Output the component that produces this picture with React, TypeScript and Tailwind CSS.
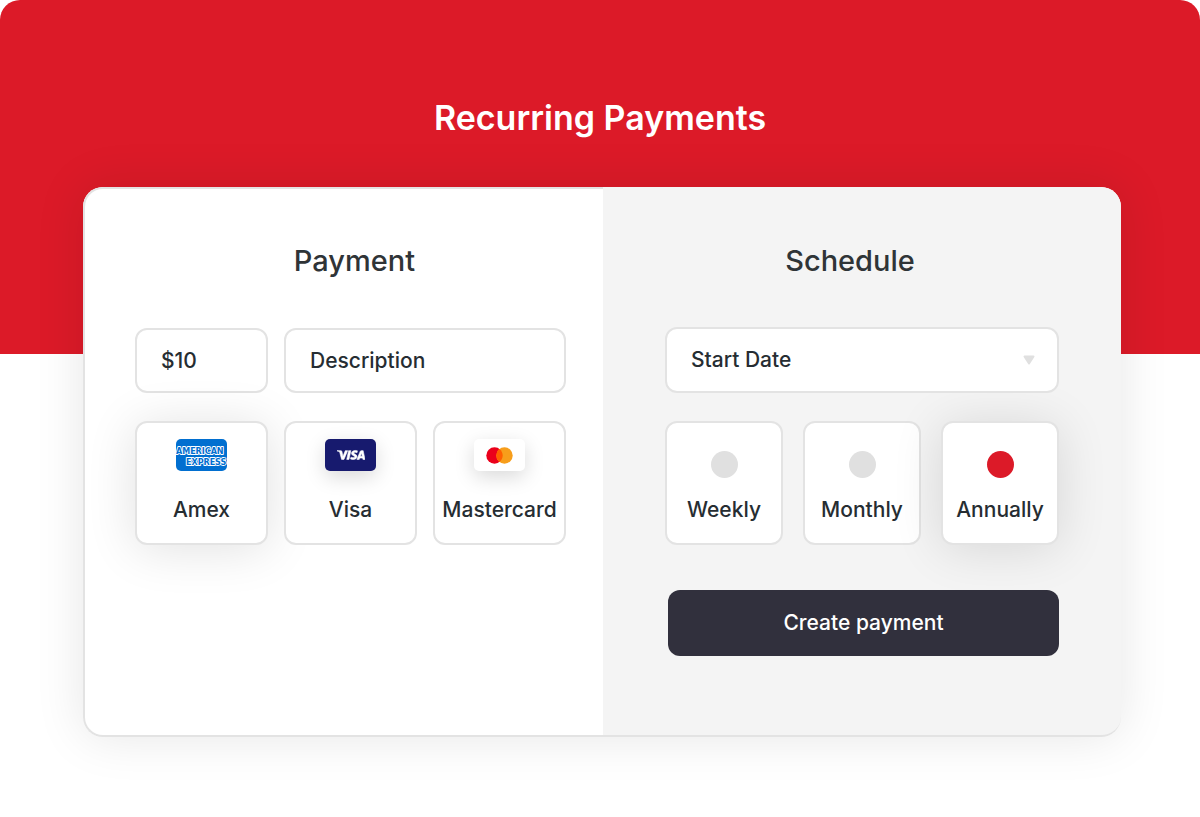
import { useState, type ReactNode } from "react";
import { SiVisa } from "react-icons/si";

function AmexLogo() {
  return (
    <svg viewBox="0 0 51 32" className="h-8 w-[51px] rounded-[5px] bg-[#016fd0]" aria-hidden="true">
      <g
        fill="#016fd0"
        stroke="#ffffff"
        strokeWidth="1.8"
        strokeLinejoin="round"
        paintOrder="stroke"
        fontFamily="DejaVu Sans, sans-serif"
        fontWeight="700"
        fontSize="8"
      >
        <text x="0" y="15">AMERICAN</text>
        <text x="10" y="26">EXPRESS</text>
      </g>
    </svg>
  );
}

function VisaLogo() {
  return (
    <span className="flex h-8 w-[51px] items-center justify-center rounded-[5px] bg-[#171a6e] text-white shadow-[0_6px_20px_rgba(0,0,0,0.15)]">
      <SiVisa className="size-7 stroke-current" strokeWidth="0.5" aria-hidden="true" />
    </span>
  );
}

function MastercardLogo() {
  return (
    <span className="flex h-8 w-[51px] items-center justify-center rounded-[5px] bg-white shadow-[0_6px_20px_rgba(0,0,0,0.15)]">
      <svg viewBox="0 0 27 17" className="h-[17px] w-[27px]" aria-hidden="true">
        <circle cx="8.5" cy="8.5" r="8.2" fill="#eb001b" />
        <circle cx="18.5" cy="8.5" r="8.2" fill="#f79e1b" />
        <path d="M13.5 2A8.2 8.2 0 0 1 13.5 15A8.2 8.2 0 0 1 13.5 2Z" fill="#ff5f00" />
      </svg>
    </span>
  );
}

const methods: { name: string; logo: ReactNode }[] = [
  { name: "Amex", logo: <AmexLogo /> },
  { name: "Visa", logo: <VisaLogo /> },
  { name: "Mastercard", logo: <MastercardLogo /> },
];

const frequencies = ["Weekly", "Monthly", "Annually"];

const field =
  "min-w-0 w-full rounded-xl border-2 border-[#e3e3e3] bg-white px-6 text-[21px] font-medium text-[#262d32] outline-none placeholder:text-[#262d32] placeholder:opacity-100";
const tile =
  "flex h-[124px] cursor-pointer flex-col items-center rounded-xl border-2 border-[#e3e3e3] bg-white text-[21px] leading-7 font-medium text-[#262d32]";
const raised = "shadow-[0_4px_50px_rgba(0,0,0,0.12)]";

export default function App() {
  const [method, setMethod] = useState("Amex");
  const [frequency, setFrequency] = useState("Annually");

  return (
    <main className="min-h-screen bg-white pb-20 font-['Inter',sans-serif]">
      <header className="h-[354px] rounded-t-[20px] bg-[#dc1a28] pt-[94px]">
        <h1 className="text-center text-[34px] leading-12 font-semibold text-white">Recurring Payments</h1>
      </header>

      <form
        onSubmit={(event) => event.preventDefault()}
        className="relative -mt-[167px] mr-[79px] ml-[83px] grid min-h-[550px] grid-cols-[520fr_518fr] rounded-[20px] bg-white shadow-[0_0_50px_rgba(0,0,0,0.1)]"
      >
        <section className="rounded-l-[20px] border-2 border-r-0 border-[#e3e3e3] bg-white pt-[52px] pr-[37px] pl-[50px]">
          <h2 className="pl-2 text-center text-[29px] leading-10 font-medium text-[#2f3437]">Payment</h2>
          <div className="mt-[47px] grid grid-cols-3 gap-x-4 gap-y-7">
            <input aria-label="Amount" defaultValue="$10" className={`${field} h-[65px]`} />
            <input aria-label="Description" placeholder="Description" className={`${field} col-span-2 h-[65px]`} />
            {methods.map(({ name, logo }) => (
              <label key={name} className={`${tile} pt-4 ${method === name ? raised : ""}`}>
                <input
                  type="radio"
                  name="method"
                  value={name}
                  checked={method === name}
                  onChange={() => setMethod(name)}
                  className="sr-only"
                />
                {logo}
                <span className="mt-[25px]">{name}</span>
              </label>
            ))}
          </div>
        </section>

        <section className="rounded-r-[20px] border-b-2 border-[#e3e3e3] bg-[#f4f4f4] px-[62px] pt-[54px]">
          <h2 className="pr-6 text-center text-[29px] leading-10 font-medium text-[#2f3437]">Schedule</h2>
          <div className="relative mt-[46px]">
            <select aria-label="Start Date" defaultValue="" className={`${field} block h-[66px] appearance-none`}>
              <option value="">Start Date</option>
              <option value="today">Today</option>
              <option value="month">Next month</option>
            </select>
            <svg
              viewBox="0 0 12 10"
              className="pointer-events-none absolute top-7 right-6 h-[10px] w-3"
              aria-hidden="true"
            >
              <path d="M1.5 1.5H10.5L6 8.5Z" fill="#e0e0e0" stroke="#e0e0e0" strokeWidth="2" strokeLinejoin="round" />
            </svg>
          </div>
          <div className="mt-7 grid grid-cols-3 gap-5">
            {frequencies.map((name) => (
              <label key={name} className={`${tile} pt-7 ${frequency === name ? raised : ""}`}>
                <input
                  type="radio"
                  name="frequency"
                  value={name}
                  checked={frequency === name}
                  onChange={() => setFrequency(name)}
                  className="size-[27px] appearance-none rounded-full bg-[#e0e0e0] checked:bg-[#dc1a28]"
                />
                <span className="mt-[18px]">{name}</span>
              </label>
            ))}
          </div>
          <div className="mt-[45px] pl-[3px]">
            <button
              type="submit"
              className="h-[66px] w-full rounded-xl bg-[#31303d] text-[21px] font-medium text-white"
            >
              Create payment
            </button>
          </div>
        </section>
      </form>
    </main>
  );
}
